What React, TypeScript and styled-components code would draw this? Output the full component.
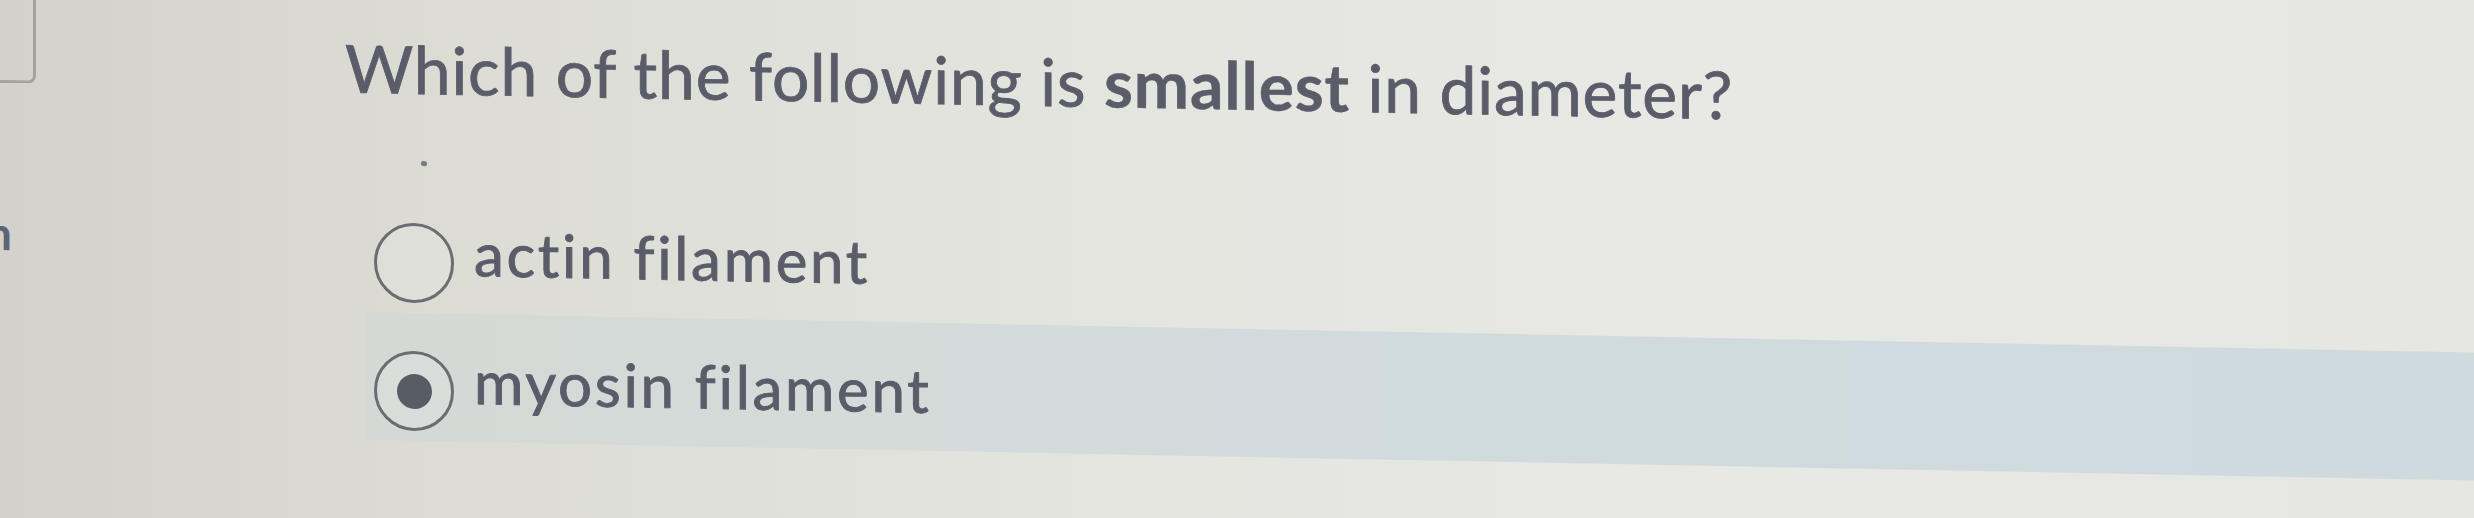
import styled, { createGlobalStyle } from "styled-components";

const GlobalStyle = createGlobalStyle`
  html, body {
    margin: 0;
    padding: 0;
  }
  body {
    font-family: Lato, "Liberation Sans", sans-serif;
    font-variant-ligatures: none;
    background: #dcdcd5;
  }
`;

type Choice = { id: string; label: string };

const choices: Choice[] = [
  { id: "actin", label: "actin filament" },
  { id: "myosin", label: "myosin filament" },
];

const selectedId = "myosin";

function App() {
  return (
    <>
      <GlobalStyle />
      <Page>
        <Tilt>
          <Sidebar>
            <CardEdge />
            <NavLetter>n</NavLetter>
          </Sidebar>
          <Main>
            <Question>
              Which of the following is <strong>smallest</strong> in diameter?
            </Question>
            <Speck />
            <Answers>
              {choices.map((c) => (
                <AnswerRow key={c.id} selected={c.id === selectedId}>
                  <Radio checked={c.id === selectedId} />
                  <AnswerLabel>{c.label}</AnswerLabel>
                </AnswerRow>
              ))}
            </Answers>
          </Main>
        </Tilt>
      </Page>
    </>
  );
}

export default App;

const Page = styled.div`
  width: 100vw;
  height: 518px;
  overflow: hidden;
  background: linear-gradient(
    90deg,
    #d2d2ca 0%,
    #dcdcd5 18%,
    #e5e5e0 45%,
    #e8e8e4 70%,
    #e6e6e2 100%
  );
`;

const Tilt = styled.div`
  display: flex;
  height: 100%;
  transform: skewY(1.1deg);
  transform-origin: 365px 0;
`;

const Sidebar = styled.div`
  width: 36px;
  flex-shrink: 0;
  display: flex;
  flex-direction: column;
  overflow: hidden;
`;

const CardEdge = styled.div`
  height: 110px;
  margin-top: -20px;
  box-sizing: border-box;
  border-right: 3px solid #a3a39d;
  border-bottom: 3px solid #a3a39d;
  border-bottom-right-radius: 8px;
`;

const NavLetter = styled.span`
  margin-top: 127px;
  margin-left: -14px;
  font-size: 46px;
  font-weight: 700;
  line-height: 1;
  color: #5d6478;
`;

const Main = styled.div`
  flex: 1;
  display: flex;
  flex-direction: column;
  padding: 28px 0 0 309px;
`;

const Question = styled.h2`
  margin: 0;
  font-size: 66px;
  font-weight: 400;
  line-height: 1.2;
  letter-spacing: 0.8px;
  color: #5a5d69;
  -webkit-text-stroke: 0.8px #5a5d69;
  white-space: nowrap;

  strong {
    font-weight: 700;
    -webkit-text-stroke: 0.4px #5a5d69;
  }
`;

const Speck = styled.div`
  width: 6px;
  height: 5px;
  margin: 53px 0 19px 76px;
  border-radius: 2px;
  background: #7a7c80;
`;

const Answers = styled.div`
  display: flex;
  flex-direction: column;
  margin-left: 20px;
`;

const AnswerRow = styled.label<{ selected: boolean }>`
  display: flex;
  align-items: flex-start;
  gap: 20px;
  height: 128px;
  box-sizing: border-box;
  padding: 38px 0 10px 9px;
  background: ${(p) =>
    p.selected
      ? "linear-gradient(90deg, #d4d9d5 0%, #d4dbd9 25%, #d1dbde 45%, #cfdadf 100%)"
      : "transparent"};
`;

const Radio = styled.span<{ checked: boolean }>`
  width: 80px;
  height: 80px;
  box-sizing: border-box;
  flex-shrink: 0;
  border: 3px solid #6c6d70;
  border-radius: 50%;
  display: flex;
  align-items: center;
  justify-content: center;
  background: rgba(255, 255, 255, 0.12);

  &::after {
    content: "";
    display: ${(p) => (p.checked ? "block" : "none")};
    width: 35px;
    height: 35px;
    border-radius: 50%;
    background: #585c65;
  }
`;

const AnswerLabel = styled.span`
  margin-top: -7px;
  font-size: 60px;
  line-height: 1.2;
  letter-spacing: 2.7px;
  color: #5a5d69;
  -webkit-text-stroke: 0.9px #5a5d69;
  white-space: nowrap;
`;
